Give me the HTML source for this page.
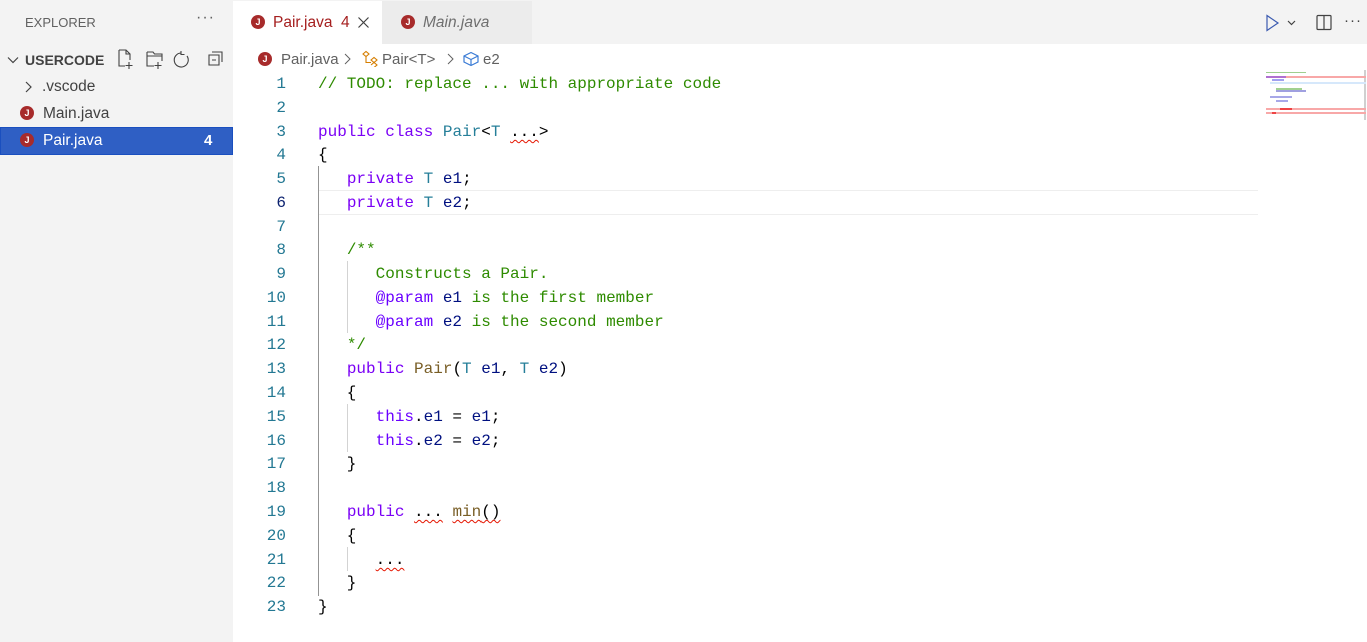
<!DOCTYPE html>
<html><head><meta charset="utf-8"><style>
*{margin:0;padding:0;box-sizing:border-box}
body{width:1367px;height:642px;overflow:hidden;background:#fff;font-family:"Liberation Sans","DejaVu Sans",sans-serif;position:relative}
.side{position:absolute;left:0;top:0;width:233px;height:642px;background:#f3f3f3}
.abs{position:absolute}
.ui{font-size:15px;color:#616161}
.jic{position:absolute;width:14px;height:14px;border-radius:50%;background:#a72b2b;color:#fff;font:bold 9px "Liberation Sans",sans-serif;text-align:center;line-height:14px}
.code{position:absolute;left:318px;font-family:"Liberation Mono",monospace;font-size:16px;white-space:pre;color:#000;height:24px;line-height:24px}
.ln{position:absolute;left:240px;width:46px;text-align:right;font-family:"Liberation Mono",monospace;font-size:16px;color:#237893;height:24px;line-height:24px}
.k{color:#7a00f5}.t{color:#267f99}.c{color:#2e8b00}.v{color:#001080}.f{color:#795e26}.d{color:#6a00ff}
.sq{text-decoration:underline wavy #e51400;text-decoration-thickness:1px;text-underline-offset:3px}
.mm{position:absolute;height:2px}
</style></head><body>
<div class="side"></div>
<div class="abs ui" style="left:25px;top:15px;font-size:13px">EXPLORER</div>
<div class="abs ui" style="left:196px;top:9px;font-size:16px;letter-spacing:1px">···</div>
<svg class="abs" style="left:6px;top:53px" width="14" height="14" viewBox="0 0 14 14"><path d="M2 4.5l5 5 5-5" fill="none" stroke="#424242" stroke-width="1.2"/></svg>
<div class="abs" style="left:25px;top:52px;font-size:14px;font-weight:bold;color:#424242">USERCODE</div>
<svg class="abs" style="left:116px;top:48px" width="112" height="22" viewBox="0 0 112 22" fill="none" stroke="#424242" stroke-width="1.1">
<path d="M3 2h7l4 4v6M3 2v16h6M10 2v4h4M13 14v7M9.5 17.5h7"/>
<path d="M31 4h6l1.5 2H46v7M31 4v14h7M31 8h15M42 14v7M38.5 17.5h7"/>
<path d="M65 5a7 7 0 1 0 6 3M65 3v3.5h3.5"/>
<path d="M93 7h10v10H93zM96 4h10v10M96 12h4"/>
</svg>
<svg class="abs" style="left:22px;top:80px" width="12" height="14" viewBox="0 0 12 14"><path d="M4 2l5 5-5 5" fill="none" stroke="#424242" stroke-width="1.2"/></svg>
<div class="abs ui" style="left:42px;top:78px;color:#424242;font-size:15.5px">.vscode</div>
<div class="jic" style="left:20px;top:106px">J</div>
<div class="abs ui" style="left:43px;top:105px;color:#424242;font-size:15.5px">Main.java</div>
<div class="abs" style="left:0;top:127px;width:233px;height:28px;background:#2f5fc4;border:1px solid #1a4fbf"></div>
<div class="jic" style="left:20px;top:133px">J</div>
<div class="abs" style="left:43px;top:132px;font-size:15.5px;color:#fff">Pair.java</div>
<div class="abs" style="left:204px;top:132px;font-size:15px;color:#fff;font-weight:bold">4</div>

<div class="abs" style="left:233px;top:0;width:1134px;height:44px;background:#f3f3f3"></div>
<div class="abs" style="left:233px;top:1px;width:149px;height:43px;background:#fff"></div>
<div class="abs" style="left:382px;top:1px;width:150px;height:43px;background:#ececec"></div>
<div class="jic" style="left:251px;top:15px">J</div>
<div class="abs" style="left:273px;top:14px;font-size:15.5px;color:#a51f1f">Pair.java&nbsp;&nbsp;4</div>
<svg class="abs" style="left:357px;top:16px" width="13" height="13" viewBox="0 0 13 13"><path d="M1.5 1.5l10 10M11.5 1.5l-10 10" stroke="#424242" stroke-width="1.2"/></svg>
<div class="jic" style="left:401px;top:15px">J</div>
<div class="abs" style="left:423px;top:14px;font-size:15.5px;color:#6f6f6f;font-style:italic">Main.java</div>
<svg class="abs" style="left:1264px;top:13px" width="103" height="20" viewBox="0 0 103 20" fill="none" stroke="#424242" stroke-width="1.2">
<path d="M3 2.5l11 7.5-11 7.5z" stroke="#3a5ab0"/><path d="M24 8l3.5 3.5L31 8"/>
<rect x="53" y="2.5" width="14" height="14" rx="1"/><path d="M60 2.5v14"/>
</svg>
<div class="abs ui" style="left:1344px;top:12px;color:#424242;letter-spacing:1px">···</div>

<div class="jic" style="left:258px;top:52px">J</div>
<div class="abs ui" style="left:281px;top:51px;font-size:15px">Pair.java</div>
<svg class="abs" style="left:343px;top:53px" width="10" height="12"><path d="M2 1l5 5-5 5" fill="none" stroke="#616161"/></svg>
<svg class="abs" style="left:361px;top:50px" width="18" height="17" viewBox="0 0 18 17" fill="none" stroke="#d67e00" stroke-width="1.1"><path d="M2 4l3-2.5L8 4 5 6.5zM10 10l3-2.5 3 2.5-3 2.5zM10 15l3-2.5 3 2.5-3 2.5M5 6.5v6h5"/></svg>
<div class="abs ui" style="left:382px;top:51px;font-size:15px">Pair&lt;T&gt;</div>
<svg class="abs" style="left:446px;top:53px" width="10" height="12"><path d="M2 1l5 5-5 5" fill="none" stroke="#616161"/></svg>
<svg class="abs" style="left:462px;top:51px" width="18" height="16" viewBox="0 0 18 16" fill="none" stroke="#3a7bd5" stroke-width="1.2"><path d="M9 1.5l7 3.5v6l-7 3.5-7-3.5V5zM2 5l7 3.5L16 5M9 8.5v6"/></svg>
<div class="abs ui" style="left:483px;top:51px;font-size:15px">e2</div>

<div class="abs" style="left:318px;top:190px;width:940px;height:25px;border-top:1px solid #eeeeee;border-bottom:1px solid #eeeeee"></div>
<div class="abs" style="left:318px;top:166px;width:1px;height:430px;background:#939393"></div>
<div class="abs" style="left:347px;top:261px;width:1px;height:72px;background:#d3d3d3"></div>
<div class="abs" style="left:347px;top:404px;width:1px;height:48px;background:#d3d3d3"></div>
<div class="abs" style="left:347px;top:547px;width:1px;height:24px;background:#d3d3d3"></div>

<div class="ln" style="top:72px">1</div><div class="code" style="top:72px"><span class="c">// TODO: replace ... with appropriate code</span></div>
<div class="ln" style="top:96px">2</div>
<div class="ln" style="top:120px">3</div><div class="code" style="top:120px"><span class="k">public</span> <span class="k">class</span> <span class="t">Pair</span>&lt;<span class="t">T</span> <span class="sq">...</span>&gt;</div>
<div class="ln" style="top:143px">4</div><div class="code" style="top:143px">{</div>
<div class="ln" style="top:167px">5</div><div class="code" style="top:167px">   <span class="k">private</span> <span class="t">T</span> <span class="v">e1</span>;</div>
<div class="ln" style="top:191px;color:#0b216f">6</div><div class="code" style="top:191px">   <span class="k">private</span> <span class="t">T</span> <span class="v">e2</span>;</div>
<div class="ln" style="top:215px">7</div>
<div class="ln" style="top:238px">8</div><div class="code" style="top:238px">   <span class="c">/**</span></div>
<div class="ln" style="top:262px">9</div><div class="code" style="top:262px">      <span class="c">Constructs a Pair.</span></div>
<div class="ln" style="top:286px">10</div><div class="code" style="top:286px">      <span class="d">@param</span> <span class="v">e1</span> <span class="c">is the first member</span></div>
<div class="ln" style="top:310px">11</div><div class="code" style="top:310px">      <span class="d">@param</span> <span class="v">e2</span> <span class="c">is the second member</span></div>
<div class="ln" style="top:333px">12</div><div class="code" style="top:333px">   <span class="c">*/</span></div>
<div class="ln" style="top:357px">13</div><div class="code" style="top:357px">   <span class="k">public</span> <span class="f">Pair</span>(<span class="t">T</span> <span class="v">e1</span>, <span class="t">T</span> <span class="v">e2</span>)</div>
<div class="ln" style="top:381px">14</div><div class="code" style="top:381px">   {</div>
<div class="ln" style="top:405px">15</div><div class="code" style="top:405px">      <span class="d">this</span>.<span class="v">e1</span> = <span class="v">e1</span>;</div>
<div class="ln" style="top:429px">16</div><div class="code" style="top:429px">      <span class="d">this</span>.<span class="v">e2</span> = <span class="v">e2</span>;</div>
<div class="ln" style="top:452px">17</div><div class="code" style="top:452px">   }</div>
<div class="ln" style="top:476px">18</div>
<div class="ln" style="top:500px">19</div><div class="code" style="top:500px">   <span class="k">public</span> <span class="sq">...</span> <span class="sq"><span class="f">min</span>()</span></div>
<div class="ln" style="top:524px">20</div><div class="code" style="top:524px">   {</div>
<div class="ln" style="top:548px">21</div><div class="code" style="top:548px">      <span class="sq">...</span></div>
<div class="ln" style="top:571px">22</div><div class="code" style="top:571px">   }</div>
<div class="ln" style="top:595px">23</div><div class="code" style="top:595px">}</div>

<div class="abs" style="left:1364px;top:70px;width:2px;height:50px;background:#d0d0d0"></div>
<div class="mm" style="left:1266px;top:72px;width:40px;background:#9fcf8f;height:1px"></div>
<div class="mm" style="left:1266px;top:76px;width:100px;background:#f8a8a8"></div>
<div class="mm" style="left:1266px;top:76px;width:20px;background:#b070d0"></div>
<div class="mm" style="left:1270px;top:82px;width:96px;background:#d6e8fb"></div>
<div class="mm" style="left:1272px;top:79px;width:12px;background:#a0a0f0"></div>
<div class="mm" style="left:1276px;top:88px;width:26px;background:#a0d090"></div>
<div class="mm" style="left:1276px;top:90px;width:30px;background:#a0a0e0"></div>
<div class="mm" style="left:1270px;top:96px;width:22px;background:#a8a8e8"></div>
<div class="mm" style="left:1276px;top:100px;width:12px;background:#a8a8e8"></div>
<div class="mm" style="left:1266px;top:108px;width:100px;background:#f8a8a8"></div>
<div class="mm" style="left:1280px;top:108px;width:12px;background:#ee4444"></div>
<div class="mm" style="left:1266px;top:112px;width:100px;background:#f8a8a8"></div>
<div class="mm" style="left:1272px;top:112px;width:4px;background:#ee4444"></div>
</body></html>
